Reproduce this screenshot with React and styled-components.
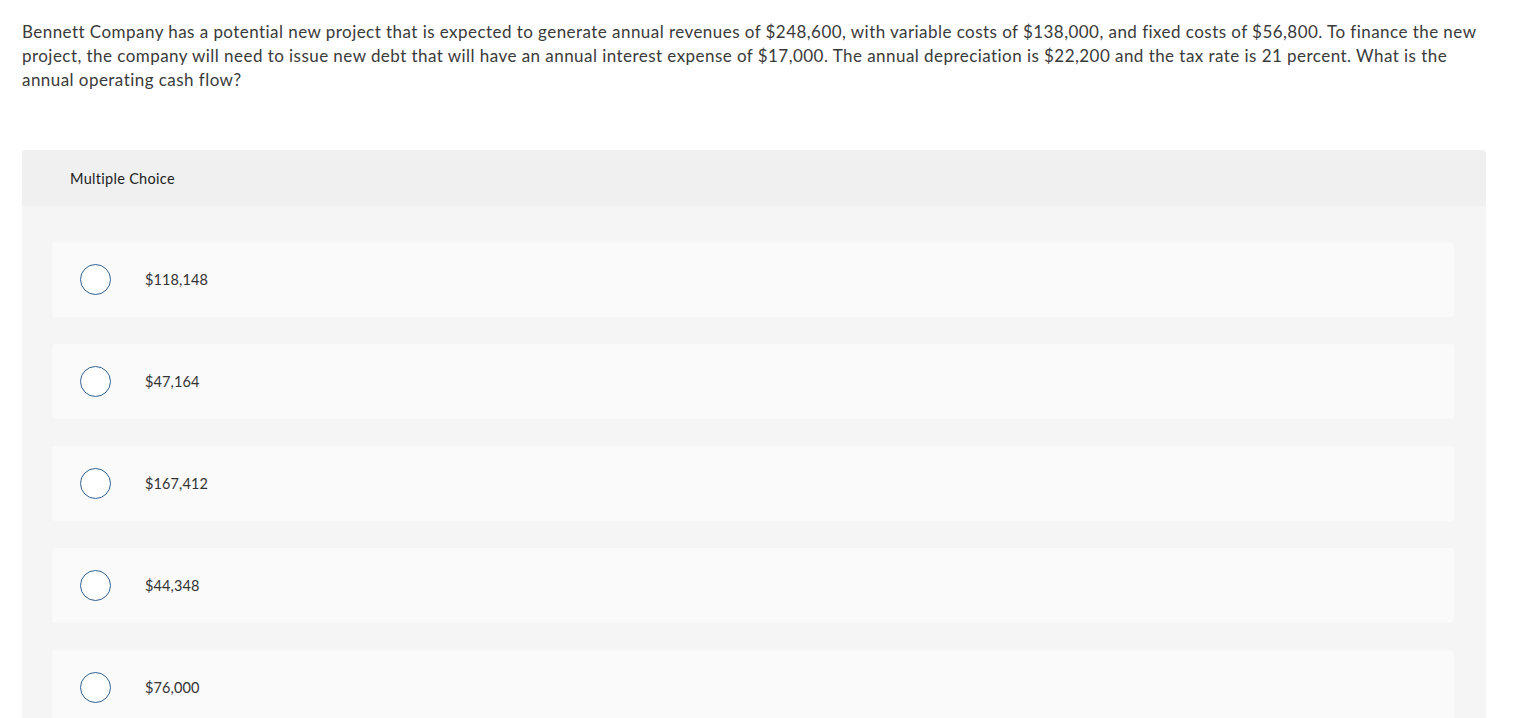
import React from "react";
import styled, { createGlobalStyle } from "styled-components";

const options = ["$118,148", "$47,164", "$167,412", "$44,348", "$76,000"];

const GlobalStyle = createGlobalStyle`
  body {
    margin: 0;
    background: #fff;
    font-family: "Lato", "Open Sans", sans-serif;
    color: #333;
  }
`;

export default function App() {
  return (
    <Page>
      <GlobalStyle />
      <Question>
        Bennett Company has a potential new project that is expected to generate annual revenues of
        $248,600, with variable costs of $138,000, and fixed costs of $56,800. To finance the new
        project, the company will need to issue new debt that will have an annual interest expense of
        $17,000. The annual depreciation is $22,200 and the tax rate is 21 percent. What is the annual
        operating cash flow?
      </Question>
      <Panel>
        <PanelHeader>Multiple Choice</PanelHeader>
        <PanelBody>
          {options.map((o) => (
            <Option key={o}>
              <Radio />
              <OptionText>{o}</OptionText>
            </Option>
          ))}
        </PanelBody>
      </Panel>
    </Page>
  );
}

const Page = styled.div`
  padding: 20px 22px 0 22px;
`;

const Question = styled.p`
  margin: 0 0 58px 0;
  font-size: 17px;
  line-height: 24px;
  letter-spacing: 0.45px;
  color: #3a3a3a;
  max-width: 1460px;
`;

const Panel = styled.div`
  width: 1464px;
  border-radius: 4px 4px 0 0;
  overflow: hidden;
  background: #f5f5f5;
`;

const PanelHeader = styled.div`
  height: 56px;
  background: #f0f0f0;
  display: flex;
  align-items: center;
  padding-left: 48px;
  font-size: 14.5px;
  letter-spacing: 0.3px;
  color: #222;
`;

const PanelBody = styled.div`
  padding: 36px 32px 20px 30px;
  display: flex;
  flex-direction: column;
  gap: 27px;
`;

const Option = styled.div`
  height: 75px;
  background: #fafafa;
  border-radius: 4px;
  display: flex;
  align-items: center;
  padding-left: 28px;
`;

const Radio = styled.span`
  box-sizing: border-box;
  width: 31px;
  height: 31px;
  border: 1.5px solid #2f6293;
  border-radius: 50%;
  background: #fff;
  flex-shrink: 0;
`;

const OptionText = styled.span`
  margin-left: 34px;
  font-size: 14.5px;
  letter-spacing: 0.1px;
  color: #333;
`;
